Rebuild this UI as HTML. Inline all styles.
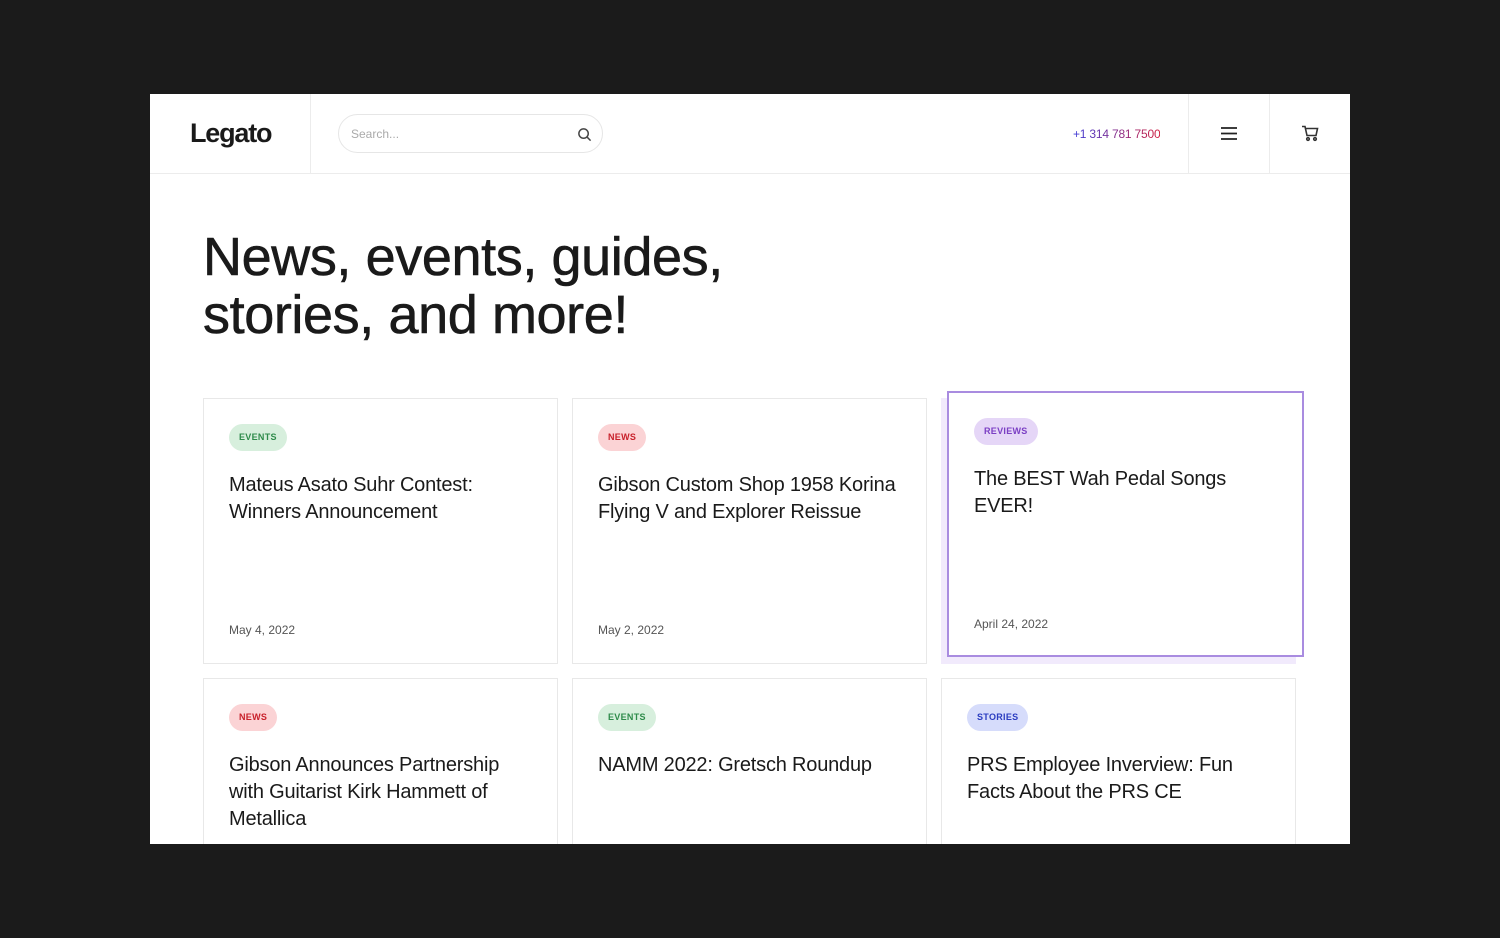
<!DOCTYPE html>
<html><head><meta charset="utf-8"><style>
*{box-sizing:border-box;margin:0;padding:0}
body{width:1500px;height:938px;background:#1b1b1b;font-family:"Liberation Sans",sans-serif;position:relative;overflow:hidden}
.page{position:absolute;left:150px;top:94px;width:1200px;height:750px;background:#fff;overflow:hidden}
.hdr{position:absolute;left:0;top:0;width:1200px;height:80px;border-bottom:1px solid #ececec}
.logo{position:absolute;left:40px;top:24px;font-size:27px;font-weight:bold;letter-spacing:-1.2px;color:#1a1a1a}
.vl{position:absolute;top:0;height:80px;border-left:1px solid #ececec}
.search{position:absolute;left:188px;top:20px;width:265px;height:39px;border:1px solid #e6e6e6;border-radius:20px}
.search span{position:absolute;left:12px;top:12px;font-size:12px;color:#aaa}
.phone{position:absolute;left:923px;top:33px;font-size:12px;letter-spacing:-.2px;background:linear-gradient(90deg,#3b3bd8,#d02040);-webkit-background-clip:text;color:transparent}
h1{position:absolute;left:53px;top:134px;font-size:54px;line-height:58px;font-weight:normal;color:#1a1a1a;letter-spacing:-0.4px;-webkit-text-stroke:0.6px #1a1a1a}
.card{position:absolute;width:355px;height:266px;border:1px solid #e8e8e8;background:#fff}
.tag{position:absolute;left:25px;top:25px;height:27px;line-height:27px;padding:0 10px;border-radius:14px;font-size:9px;font-weight:bold;letter-spacing:.3px}
.ev{background:#d7efdd;color:#2e8b4a}.nw{background:#fbd3d5;color:#c8202a}.rv{background:#e5d6f7;color:#7b3fc4}.st{background:#d6dcfb;color:#2a3cc0}
.t{position:absolute;left:25px;top:73px;width:305px;font-size:20px;line-height:27px;color:#1a1a1a;letter-spacing:-.2px}
.d{position:absolute;left:25px;top:224px;font-size:12px;color:#555}
</style></head><body>
<div class="page">
<div class="hdr">
<div class="logo">Legato</div>
<div class="vl" style="left:160px"></div>
<div class="search"><span>Search...</span>
<svg style="position:absolute;left:238px;top:12px" width="15" height="15" viewBox="0 0 16 16" fill="none" stroke="#444" stroke-width="1.6"><circle cx="7" cy="7" r="5"/><path d="M11 11l3.5 3.5"/></svg></div>
<div class="phone">+1 314 781 7500</div>
<div class="vl" style="left:1038px"></div>
<svg style="position:absolute;left:1070px;top:32px" width="18" height="15" viewBox="0 0 18 15" stroke="#222" stroke-width="1.8"><path d="M1 2h16M1 7.5h16M1 13h16"/></svg>
<div class="vl" style="left:1119px"></div>
<svg style="position:absolute;left:1151px;top:31px" width="18" height="17" viewBox="0 0 18 17" fill="none" stroke="#333" stroke-width="1.6"><path d="M1 1.5h3l2 9h9l1.5-7H5"/><circle cx="7" cy="14" r="1.3"/><circle cx="14" cy="14" r="1.3"/></svg>
</div>
<h1>News, events, guides,<br>stories, and more!</h1>
<div class="card" style="left:53px;top:304px"><div class="tag ev">EVENTS</div><div class="t">Mateus Asato Suhr Contest: Winners Announcement</div><div class="d">May 4, 2022</div></div>
<div class="card" style="left:422px;top:304px"><div class="tag nw">NEWS</div><div class="t">Gibson Custom Shop 1958 Korina Flying V and Explorer Reissue</div><div class="d">May 2, 2022</div></div>
<div style="position:absolute;left:791px;top:304px;width:355px;height:266px;background:#f1eafc"></div>
<div class="card" style="left:797px;top:297px;width:357px;border:2px solid #a98ce0"><div class="tag rv">REVIEWS</div><div class="t">The BEST Wah Pedal Songs EVER!</div><div class="d">April 24, 2022</div></div>
<div class="card" style="left:53px;top:584px"><div class="tag nw">NEWS</div><div class="t">Gibson Announces Partnership with Guitarist Kirk Hammett of Metallica</div></div>
<div class="card" style="left:422px;top:584px"><div class="tag ev">EVENTS</div><div class="t">NAMM 2022: Gretsch Roundup</div></div>
<div class="card" style="left:791px;top:584px"><div class="tag st">STORIES</div><div class="t">PRS Employee Inverview: Fun Facts About the PRS CE</div></div>
</div>
</body></html>
